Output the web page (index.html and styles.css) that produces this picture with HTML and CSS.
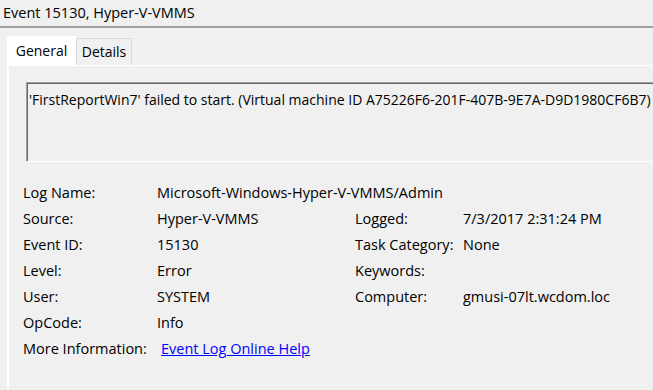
FILE: index.html
```html
<!DOCTYPE html>
<html lang="en">
<head>
    <meta charset="UTF-8">
    <title>Event 15130, Hyper-V-VMMS</title>
    <link rel="stylesheet" href="styles.css">
</head>
<body>
    <div class="window-title">Event 15130, Hyper-V-VMMS</div>
    <div class="title-rule"></div>

    <div class="tabs">
        <div class="tab-strip">
            <div class="tab active">General</div>
            <div class="tab">Details</div>
        </div>

        <div class="tab-page">
            <div class="message">'FirstReportWin7' failed to start. (Virtual machine ID A75226F6-201F-407B-9E7A-D9D1980CF6B7)</div>

            <div class="fields">
                <div class="label">Log Name:</div>
                <div class="value wide">Microsoft-Windows-Hyper-V-VMMS/Admin</div>

                <div class="label">Source:</div>
                <div class="value">Hyper-V-VMMS</div>
                <div class="label">Logged:</div>
                <div class="value">7/3/2017 2:31:24 PM</div>

                <div class="label">Event ID:</div>
                <div class="value">15130</div>
                <div class="label">Task Category:</div>
                <div class="value">None</div>

                <div class="label">Level:</div>
                <div class="value">Error</div>
                <div class="label">Keywords:</div>
                <div class="value"></div>

                <div class="label">User:</div>
                <div class="value">SYSTEM</div>
                <div class="label">Computer:</div>
                <div class="value">gmusi-07lt.wcdom.loc</div>

                <div class="label">OpCode:</div>
                <div class="value wide">Info</div>

                <div class="label">More Information:</div>
                <div class="value wide"><a href="#">Event Log Online Help</a></div>
            </div>
        </div>
    </div>
</body>
</html>
```

FILE: styles.css
```css
body {
    margin: 0;
    width: 653px;
    height: 390px;
    overflow: hidden;
    background-color: #f0f0f0;
    font-family: "Open Sans", "Noto Sans", sans-serif;
    font-size: 14px;
    color: #000;
}

.window-title {
    height: 26px;
    line-height: 26px;
    padding-left: 3px;
    font-size: 14.5px;
    white-space: nowrap;
}

.title-rule {
    height: 2px;
    background-color: #a0a0a0;
}

.tabs {
    margin: 8px 0 0 7px;
}

.tab-strip {
    display: flex;
    align-items: flex-end;
    height: 29px;
}

.tab {
    box-sizing: border-box;
    height: 27px;
    width: 56px;
    padding-top: 3px;
    text-align: center;
    border: 1px solid #d9d9d9;
    border-bottom: none;
    background-color: #f0f0f0;
}

.tab.active {
    height: 30px;
    width: 69px;
    padding-top: 4px;
    margin-bottom: -1px;
    border-color: #fff;
    background-color: #fff;
    position: relative;
}

.tab-page {
    border-top: 1px solid #fff;
    border-left: 2px solid #fff;
    padding: 16px 0 0 14px;
    height: 320px;
}

.message {
    box-sizing: border-box;
    height: 80px;
    margin-left: 3px;
    margin-right: -20px;
    padding: 7px 2px;
    white-space: nowrap;
    border: 1px solid;
    border-color: #a0a0a0 #fff #fff #a0a0a0;
    box-shadow: inset 1px 1px 0 #696969;
}

.fields {
    display: grid;
    grid-template-columns: 134px 198px 108px auto;
    grid-auto-rows: 26px;
    align-items: center;
    margin-top: 17px;
    font-size: 14.5px;
    white-space: nowrap;
}

.value.wide {
    grid-column: 2 / 5;
}

.fields a {
    margin-left: 4px;
    color: #0000ff;
}
```
